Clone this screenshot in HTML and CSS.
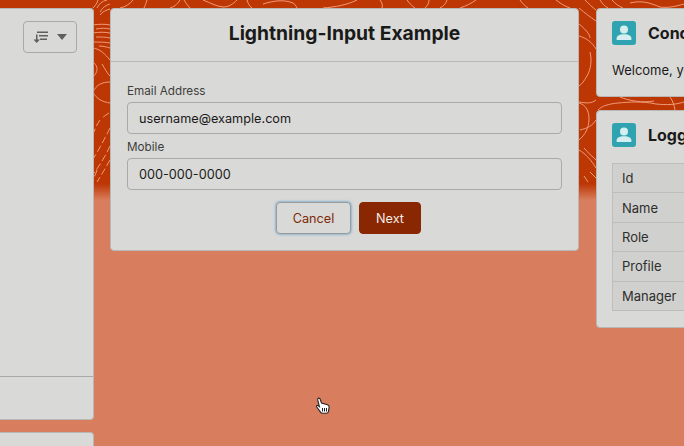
FILE: index.html
```html
<!DOCTYPE html>
<html lang="en">
<head>
  <meta charset="UTF-8" />
  <meta name="viewport" content="width=device-width, initial-scale=1.0"/>
  <title>Lightning-Input Example</title>
  <link rel="stylesheet" href="styles.css">
</head>
<body>
  <svg class="contours" viewBox="0 0 684 200" width="684" height="200" fill="none" stroke="#f09a78" stroke-width="1">
    <!-- top strip -->
    <path d="M97 8c2-4 5-7 10-8M120 8c5-1 10-4 13-8M147 0c-1 3-2 6-3 8M170 8c6-2 8-5 10-8M184 0c2 3 3 5 6 8M203 0c8 3 12 6 20 7 6 0 10-3 14-7M247 0c1 3 2 6 5 8M263 4c10-3 20-5 30-1 2 1 3 3 4 5M323 8c12-1 24-3 34-8M380 0c2 3 3 5 2 8M407 0c2 3 5 6 8 8M425 8c3-3 4-5 4-8M440 8c4-2 6-5 7-8M460 8c6-2 12-5 16-8M520 0c2 3 5 6 8 8M556 0c4 3 8 6 14 8M600 0c2 3 4 6 8 8M612 0c3 3 6 6 11 8M630 3c12-3 20 0 30 4 6 1 14 0 24-3"/>
    <!-- left gap -->
    <path d="M93 8c3-3 4-5 5-8M100 12c2-4 6-7 10-8M110 9c-4 1-8 3-10 6M93 25c6-1 12-1 17 0M96 29c5-1 10-1 14 0M93 33c6-1 12-1 17 0M96 37c5 0 10 0 14 1M93 42c6 0 12 0 17 1M99 46c4 0 8 1 11 2"/>
    <path d="M93 48c7 1 12 6 17 12M93 62c4 3 5 7 3 11-1 2-2 3-3 4M110 82c-8 0-14 3-17 10 3 7 10 10 17 11M102 64c3 5 5 9 8 12"/>
    <path d="M109 113c-3 2-6 4-8 6M100 120c-3 4-5 9-7 14M110 128c-4 8-10 20-17 31M110 146c-4 9-10 19-16 27M110 160c-4 7-8 14-13 22M97 170c-1 3-2 6-4 9" stroke-dasharray="7 3"/>
    <!-- right gap -->
    <path d="M579 8c6 5 11 9 17 13M585 0c4 4 7 7 11 10M579 24c5 4 11 10 11 14M579 36c7 2 13 6 17 13M590 52c2 8 1 17-3 24-3 5-5 8-8 10M596 100c-5 4-10 3-17 2M579 103c7 2 10 8 10 16 0 9-4 16-10 21M580 130c8-2 12-4 16-10M579 150c7 4 12 10 17 18M584 148c4 5 8 8 12 12M590 172l6 6M584 176l4 6"/>
    <!-- gap between right cards -->
    <path d="M598 110c4-4 10-6 20-7 12-1 24-2 38 1 10 1 18 1 28-2M620 97c10 4 22 6 34 4M670 97c3 4 4 8 5 13"/>
  </svg>

  <svg class="pointer" viewBox="0 0 16 18" width="16" height="18">
    <path d="M3 1.500c1-.8 2 0 2.300 1l1.200 3.600 6 1.600c1.300.4 1.800 1.400 1.600 2.600l-.6 4c-.2 1.200-1 2-2.200 2H7.500c-.9 0-1.500-.4-2-1.200L1.600 9.800c-.5-.9.5-1.800 1.400-1.200l1.400 1L2.700 2.900c-.1-.5 0-1 .3-1.400z" fill="#fff" stroke="#222" stroke-width="1.100"/>
    <path d="M7.500 11v3.500M9.500 11v3.500M11.500 11v3.500" stroke="#222" stroke-width="1"/>
  </svg>

  <div class="page">
    <div class="side">
      <div class="panel list-panel">
        <div class="list-toolbar">
          <button class="sort-btn" type="button" aria-label="Sort">
            <svg viewBox="0 0 15 12" width="15" height="12" fill="#5f5f5f">
              <path d="M4 .5h11v1.500H4zM6 4h9v1.500H6zM7 7.500h7V9H7z"/>
              <path d="M3 3.500h1.500v5H7L3.700 12 .5 8.500H3z"/>
            </svg>
            <span class="caret"></span>
          </button>
        </div>
        <div class="list-footer"></div>
      </div>
      <div class="panel next-panel"></div>
    </div>

    <div class="panel modal">
      <h1 class="modal-title">Lightning-Input Example</h1>
      <form class="modal-body">
        <label class="field-label" for="email">Email Address</label>
        <input class="field" id="email" type="text" value="username@example.com" />
        <label class="field-label" for="mobile">Mobile</label>
        <input class="field" id="mobile" type="text" value="000-000-0000" />
        <div class="actions">
          <button class="btn btn-cancel" type="button">Cancel</button>
          <button class="btn btn-next" type="button">Next</button>
        </div>
      </form>
    </div>

    <div class="side-right">
      <div class="panel card card-welcome">
        <div class="card-head">
          <span class="avatar">
            <svg viewBox="0 0 24 24" width="24" height="24" fill="#d7eef0">
              <circle cx="12" cy="8.500" r="4"/>
              <path d="M4.500 18c0-3.300 2.500-4.800 7.500-4.800s7.500 1.500 7.500 4.800c0 .6-.4 1-1 1h-13c-.6 0-1-.4-1-1z"/>
            </svg>
          </span>
          <h2 class="card-title">Conditional Rendering</h2>
        </div>
        <p class="welcome">Welcome, you are logged in</p>
      </div>
      <div class="panel card">
        <div class="card-head">
          <span class="avatar">
            <svg viewBox="0 0 24 24" width="24" height="24" fill="#d7eef0">
              <circle cx="12" cy="8.500" r="4"/>
              <path d="M4.500 18c0-3.300 2.500-4.800 7.500-4.800s7.500 1.500 7.500 4.800c0 .6-.4 1-1 1h-13c-.6 0-1-.4-1-1z"/>
            </svg>
          </span>
          <h2 class="card-title">Logged In User</h2>
        </div>
        <table class="user-table">
          <tr><th>Id</th><td></td></tr>
          <tr><th>Name</th><td></td></tr>
          <tr><th>Role</th><td></td></tr>
          <tr><th>Profile</th><td></td></tr>
          <tr><th>Manager</th><td></td></tr>
        </table>
      </div>
    </div>
  </div>
</body>
</html>
```

FILE: styles.css
```css
html, body {
  height: 100%;
}
body {
  margin: 0;
  overflow: hidden;
  position: relative;
  font-family: "Inter", "Liberation Sans", sans-serif;
  color: #1a1a1a;
  background: linear-gradient(#bd3705 0, #bd3705 184px, #d87d5d 200px);
}
.contours {
  position: absolute;
  top: 0;
  left: 0;
}
.pointer {
  position: absolute;
  left: 315px;
  top: 397px;
  z-index: 2;
}
.page {
  position: relative;
  display: flex;
  align-items: flex-start;
  padding-top: 8px;
  height: 438px;
  overflow: hidden;
}
.panel {
  background: #d9d9d7;
  border: 1px solid #b8b8b6;
  border-radius: 4px;
  box-sizing: border-box;
}

/* left list */
.side {
  flex: 0 0 94px;
  display: flex;
  flex-direction: column;
  gap: 12px;
}
.list-panel {
  height: 412px;
  border-left: none;
  border-radius: 0 4px 4px 0;
  display: flex;
  flex-direction: column;
  justify-content: space-between;
}
.list-toolbar {
  padding: 12px 16px 0 0;
  display: flex;
  justify-content: flex-end;
}
.sort-btn {
  width: 54px;
  height: 32px;
  background: none;
  border: 1px solid #a9a9a7;
  border-radius: 4px;
  display: flex;
  align-items: center;
  justify-content: center;
  gap: 9px;
  padding: 0;
}
.caret {
  width: 0;
  height: 0;
  border-left: 5.500px solid transparent;
  border-right: 5.500px solid transparent;
  border-top: 6.500px solid #5f5f5f;
}
.list-footer {
  height: 43px;
  box-sizing: border-box;
  border-top: 1px solid #a9a9a7;
}
.next-panel {
  height: 40px;
  border-left: none;
  border-radius: 0 4px 0 0;
}

/* modal */
.modal {
  flex: 0 0 469px;
  height: 243px;
  margin: 0 17px 0 16px;
}
.modal-title {
  margin: 0;
  height: 53px;
  line-height: 49px;
  text-align: center;
  font-size: 19.300px;
  font-weight: 700;
  border-bottom: 1px solid #b8b8b6;
  box-sizing: border-box;
}
.modal-body {
  padding: 20px 16px 0;
}
.field-label {
  display: block;
  font-size: 11.700px;
  line-height: 17px;
  color: #3e3e3c;
  padding-top: 1px;
  margin-bottom: 2px;
}
.field {
  display: block;
  box-sizing: border-box;
  width: 100%;
  height: 32px;
  margin-bottom: 4px;
  padding: 0 11px;
  font: 12.700px "Inter", "Liberation Sans", sans-serif;
  color: #1a1a1a;
  background: transparent;
  border: 1px solid #a9a9a7;
  border-radius: 4px;
}
.actions {
  display: flex;
  justify-content: center;
  gap: 8px;
  margin-top: 12px;
  padding-left: 8px;
}
.btn {
  height: 32px;
  border-radius: 4px;
  font: 12.700px "Inter", "Liberation Sans", sans-serif;
  padding: 0;
}
.btn-cancel {
  width: 75px;
  color: #7d2a0b;
  background: #d9d9d7;
  border: 1px solid #9a9a98;
  box-shadow: 0 0 2px 1px #8db8d4;
}
.btn-next {
  width: 62px;
  color: #f1ece8;
  background: #8a2703;
  border: 1px solid #8a2703;
}

/* right cards */
.side-right {
  flex: 0 0 300px;
  display: flex;
  flex-direction: column;
  gap: 13px;
}
.card {
  padding: 12px 15px 16px;
}
.card-welcome {
  height: 89px;
}
.card-head {
  display: flex;
  align-items: center;
  gap: 12px;
}
.avatar {
  width: 24px;
  height: 24px;
  border-radius: 3px;
  background: #2fa3b0;
  display: block;
}
.avatar svg {
  display: block;
}
.card-title {
  margin: 0;
  font-size: 16px;
  font-weight: 700;
  white-space: nowrap;
}
.welcome {
  margin: 16px 0 0;
  font-size: 13px;
  line-height: 18px;
  white-space: nowrap;
}
.user-table {
  width: 100%;
  margin-top: 16px;
  border-collapse: collapse;
  font-size: 13px;
}
.user-table th {
  width: 90px;
  height: 29.400px;
  box-sizing: border-box;
  padding: 0 9px;
  text-align: left;
  font-weight: 400;
  color: #2e2e2c;
  background: #d0d0ce;
  border: 1px solid #bdbdbb;
}
.user-table td {
  border: 1px solid #bdbdbb;
}
```
